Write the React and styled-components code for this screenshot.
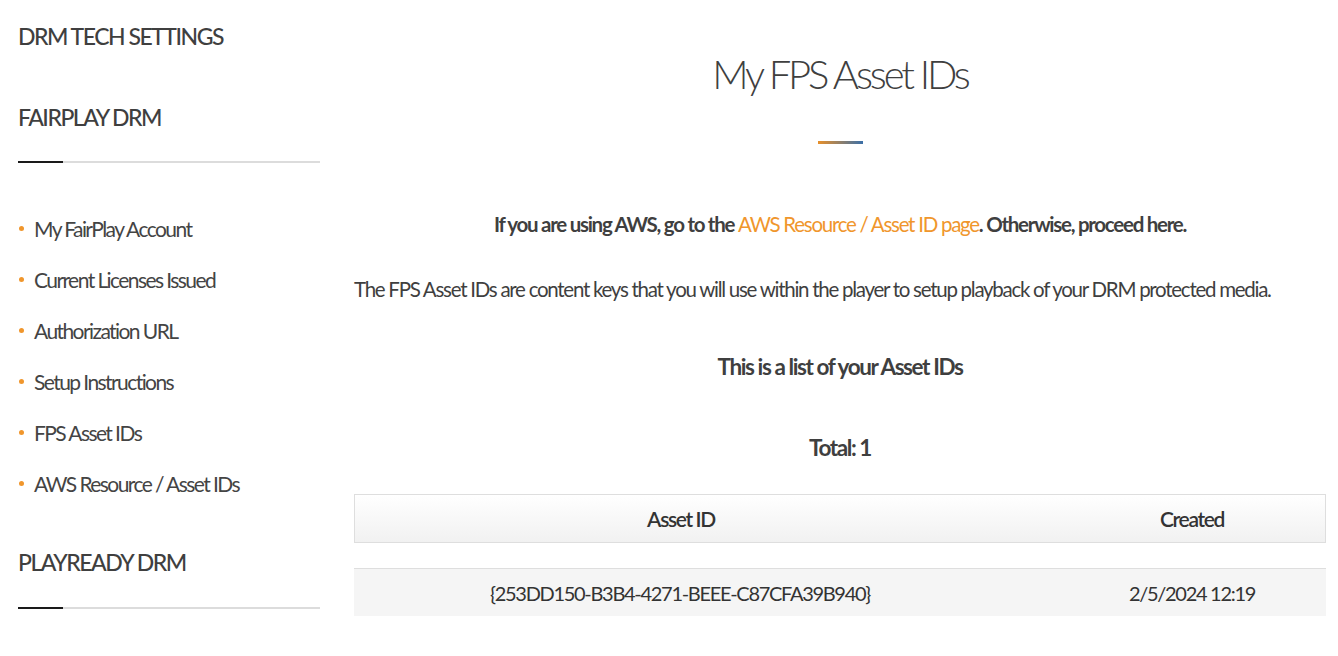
import React from "react";
import styled, { createGlobalStyle } from "styled-components";

const GlobalStyle = createGlobalStyle`
  html, body {
    margin: 0;
    padding: 0;
    background: #fff;
  }
  body {
    font-family: Lato, "Open Sans", sans-serif;
    color: #444;
  }
`;

const Page = styled.div`
  display: flex;
  align-items: flex-start;
  gap: 35px;
  padding: 0 12px 0 18px;
  width: 1338px;
  box-sizing: border-box;
`;

/* Left sidebar */
const Sidebar = styled.aside`
  width: 301px;
  flex-shrink: 0;
  padding-top: 21px;
`;

const SideTitle = styled.h2`
  margin: ${({ $top }) => $top || 0}px 0 0;
  font-size: 23px;
  line-height: 30px;
  font-weight: 500;
  letter-spacing: -0.065em;
  color: #3f3f3f;
  text-transform: uppercase;
`;

const Divider = styled.div`
  margin-top: ${({ $top }) => $top || 0}px;
  height: 2px;
  width: 302px;
  background: linear-gradient(to right, #1a1a1a 45px, #dcdcdc 45px);
`;

const NavList = styled.ul`
  list-style: none;
  margin: 40px 0 0;
  padding: 0;
`;

const NavItem = styled.li`
  display: flex;
  align-items: center;
  height: 51px;
  font-size: 21px;
  letter-spacing: -0.075em;
  color: #444;

  &::before {
    content: "";
    width: 5px;
    height: 5px;
    border-radius: 50%;
    background: #f0962c;
    margin: 0 10px 0 1px;
  }
`;

/* Main column */
const Main = styled.main`
  width: 972px;
  flex-shrink: 0;
  padding-top: 49px;
`;

const PageTitle = styled.h1`
  margin: 0;
  text-align: center;
  font-size: 40px;
  line-height: 50px;
  font-weight: 300;
  letter-spacing: -0.078em;
  color: #3f3f3f;
`;

const Accent = styled.div`
  margin: 42px auto 0;
  width: 45px;
  height: 3px;
  background: linear-gradient(to right, #e8902a, #3a6fa8);
`;

const Lead = styled.p`
  margin: ${({ $top }) => $top}px 0 0;
  text-align: ${({ $left }) => ($left ? "left" : "center")};
  font-size: ${({ $size }) => $size || 20.5}px;
  line-height: 30px;
  font-weight: ${({ $bold }) => ($bold ? 700 : 400)};
  letter-spacing: -0.062em;
  white-space: nowrap;
  color: #3f3f3f;
`;

const Link = styled.a`
  color: #f0962c;
  font-weight: 400;
  text-decoration: none;
`;

const Table = styled.div`
  margin-top: 31px;
`;

const HeadRow = styled.div`
  display: grid;
  grid-template-columns: 652px 1fr;
  height: 47px;
  border: 1px solid #dedede;
  background: linear-gradient(to bottom, #ffffff, #f1f1f1);
  align-items: center;
`;

const BodyRow = styled.div`
  display: grid;
  grid-template-columns: 652px 1fr;
  margin-top: 25px;
  height: 47px;
  border-top: 1px solid #dedede;
  background: #f5f5f5;
  align-items: center;
`;

const Cell = styled.div`
  text-align: center;
  padding-left: ${({ $shift }) => $shift || 0}px;
  font-size: ${({ $head }) => ($head ? 21 : 20)}px;
  font-weight: ${({ $head }) => ($head ? 600 : 400)};
  letter-spacing: -0.065em;
  color: #333;
`;

const navItems = [
  "My FairPlay Account",
  "Current Licenses Issued",
  "Authorization URL",
  "Setup Instructions",
  "FPS Asset IDs",
  "AWS Resource / Asset IDs",
];

export default function App() {
  return (
    <>
      <GlobalStyle />
      <Page>
        <Sidebar>
          <SideTitle>DRM Tech Settings</SideTitle>
          <SideTitle $top={51}>FairPlay DRM</SideTitle>
          <Divider $top={29} />
          <NavList>
            {navItems.map((item) => (
              <NavItem key={item}>{item}</NavItem>
            ))}
          </NavList>
          <SideTitle $top={38}>PlayReady DRM</SideTitle>
          <Divider $top={30} />
        </Sidebar>

        <Main>
          <PageTitle>My FPS Asset IDs</PageTitle>
          <Accent />
          <Lead $bold $top={65}>
            If you are using AWS, go to the{" "}
            <Link href="#">AWS Resource / Asset ID page</Link>. Otherwise,
            proceed here.
          </Lead>
          <Lead $left $top={35}>
            The FPS Asset IDs are content keys that you will use within the
            player to setup playback of your DRM protected media.
          </Lead>
          <Lead $bold $size={22.5} $top={48}>
            This is a list of your Asset IDs
          </Lead>
          <Lead $bold $size={22.5} $top={51}>
            Total: 1
          </Lead>
          <Table>
            <HeadRow>
              <Cell $head>Asset ID</Cell>
              <Cell $head $shift={52}>Created</Cell>
            </HeadRow>
            <BodyRow>
              <Cell>{"{253DD150-B3B4-4271-BEEE-C87CFA39B940}"}</Cell>
              <Cell $shift={52}>2/5/2024 12:19</Cell>
            </BodyRow>
          </Table>
        </Main>
      </Page>
    </>
  );
}
